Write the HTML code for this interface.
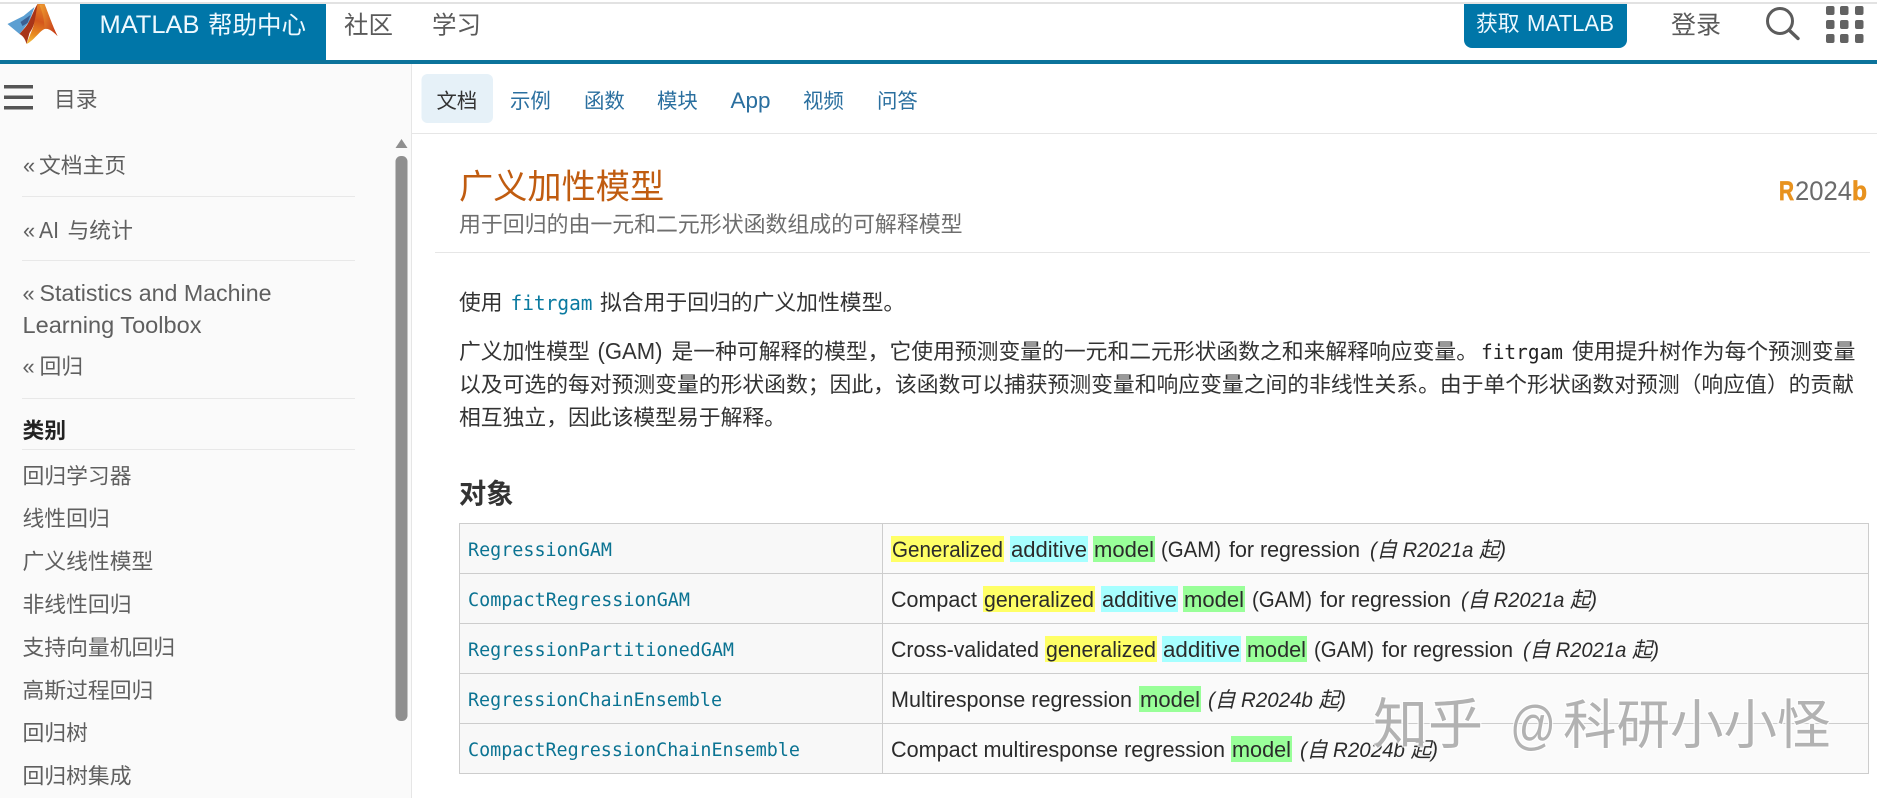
<!DOCTYPE html>
<html lang="zh-CN">
<head>
<meta charset="utf-8">
<title>广义加性模型 - MATLAB</title>
<style>
html,body{margin:0;padding:0;background:#fff;width:1877px;height:798px;overflow:hidden}
svg{display:block;filter:blur(.35px)}
text{font-family:"Liberation Sans","Noto Sans CJK SC",sans-serif;white-space:pre}
.m{font-family:"DejaVu Sans Mono","Liberation Mono",monospace}
.nav{font-size:24.5px;fill:#5a5a5a}
.side{font-size:21.8px;fill:#5f5f5f}
.lat{font-size:23.5px;fill:#5f5f5f}
.tab{font-size:20.4px;fill:#2a6f9f}
.p{font-size:21.8px;fill:#333}
.cell{font-size:21.8px;fill:#2b2b2b}
.em{font-size:21.2px;fill:#2b2b2b;font-style:italic}
.code{font-size:19px;fill:#0b7392}
</style>
</head>
<body>
<svg xmlns="http://www.w3.org/2000/svg" width="1877" height="798" viewBox="0 0 1877 798">
<defs>
<linearGradient id="lg" x1="0.6" y1="0" x2="0.35" y2="1">
<stop offset="0" stop-color="#e8892a"/><stop offset="0.45" stop-color="#d4561c"/><stop offset="0.8" stop-color="#e88a20"/><stop offset="1" stop-color="#f2b53a"/>
</linearGradient>
<linearGradient id="lr" x1="0" y1="0" x2="1" y2="0.6">
<stop offset="0" stop-color="#f0a030"/><stop offset="1" stop-color="#c8401a"/>
</linearGradient>
</defs>
<rect width="1877" height="798" fill="#fff"/>

<!-- header -->
<rect x="0" y="2" width="1877" height="2" fill="#e2e2e2"/>
<rect x="0" y="60" width="1877" height="4" fill="#0c739b"/>
<g transform="translate(-1.5,0)">
<path d="M9 24 L25 16 L36 7 L31 21 L25 29 L21 34 Z" fill="#5c9fd2"/>
<path d="M22 22 L32 15 L29 23 L24 26 Z" fill="#3c5f92"/>
<path d="M21 34 L27 27 C32 21 34 12 39 4 L41 4 C38 16 36 26 31 33 L28 44 C27 40 25 36 21 34 Z" fill="#a83418"/>
<path d="M39 4 L46 4 C50 14 54 26 59 36 C54 31 50 28 46 29 C41 31 35 41 28 44 C30 38 33 32 35 26 C37 18 38 10 39 4 Z" fill="url(#lg)"/>
<path d="M41 5 L46 4 C50 14 54 26 59 36 C54 31 50 28 46 29 C46 20 44 12 41 5 Z" fill="url(#lr)"/>
</g>
<rect x="80" y="4" width="246" height="56" fill="#0076a8"/>
<text x="99.5" y="33" font-size="25" fill="#eef9ff" textLength="100" lengthAdjust="spacingAndGlyphs">MATLAB</text>
<text x="208" y="33.5" font-size="24.5" fill="#eef9ff">帮助中心</text>
<text x="344" y="33.5" class="nav">社区</text>
<text x="432" y="33.5" class="nav">学习</text>
<path d="M1464 4 H1627 V40 a8 8 0 0 1 -8 8 H1472 a8 8 0 0 1 -8 -8 Z" fill="#0076a8"/>
<text x="1476" y="31" font-size="21.8" fill="#eef9ff">获取</text>
<text x="1527" y="31" font-size="23" fill="#eef9ff" textLength="87" lengthAdjust="spacingAndGlyphs">MATLAB</text>
<text x="1671" y="33.5" font-size="25" fill="#5a5a5a">登录</text>
<circle cx="1780" cy="21" r="12.5" fill="none" stroke="#5c5c5c" stroke-width="3"/>
<path d="M1789 30 L1798 38.5" stroke="#5c5c5c" stroke-width="3.4" stroke-linecap="round"/>
<g fill="#626262">
<rect x="1826" y="6" width="8.5" height="9" rx="2"/><rect x="1840" y="6" width="8.5" height="9" rx="2"/><rect x="1855" y="6" width="8.5" height="9" rx="2"/>
<rect x="1826" y="20" width="8.5" height="9" rx="2"/><rect x="1840" y="20" width="8.5" height="9" rx="2"/><rect x="1855" y="20" width="8.5" height="9" rx="2"/>
<rect x="1826" y="34" width="8.5" height="9" rx="2"/><rect x="1840" y="34" width="8.5" height="9" rx="2"/><rect x="1855" y="34" width="8.5" height="9" rx="2"/>
</g>

<!-- sidebar -->
<rect x="0" y="64" width="411" height="734" fill="#fafafa"/>
<rect x="411" y="64" width="1" height="734" fill="#e6e6e6"/>
<g fill="#555"><rect x="4" y="85" width="29" height="3.5"/><rect x="4" y="95.5" width="29" height="3.5"/><rect x="4" y="106" width="29" height="3.5"/></g>
<text x="54" y="107" class="side">目录</text>
<text x="23" y="173" class="side">«</text><text x="39" y="173" class="side">文档主页</text>
<rect x="22" y="196" width="333" height="1" fill="#e8e8e8"/>
<text x="23" y="238" class="side">«</text><text x="39" y="238" class="lat" textLength="20" lengthAdjust="spacingAndGlyphs">AI</text><text x="67.5" y="238" class="side">与统计</text>
<rect x="22" y="260" width="333" height="1" fill="#e8e8e8"/>
<text x="22.5" y="301" class="side">«</text><text x="39.5" y="301" class="lat" textLength="232" lengthAdjust="spacingAndGlyphs">Statistics and Machine</text>
<text x="22.5" y="333" class="lat" textLength="179" lengthAdjust="spacingAndGlyphs">Learning Toolbox</text>
<text x="22.5" y="374" class="side">«</text><text x="39.5" y="374" class="side">回归</text>
<rect x="22" y="398" width="333" height="1" fill="#e8e8e8"/>
<text x="22.5" y="438" class="side" style="fill:#222;font-weight:700">类别</text>
<rect x="22" y="449" width="333" height="1" fill="#e8e8e8"/>
<text x="22.5" y="483.5" class="side">回归学习器</text>
<text x="22.5" y="526" class="side">线性回归</text>
<text x="22.5" y="569" class="side">广义线性模型</text>
<text x="22.5" y="612" class="side">非线性回归</text>
<text x="22.5" y="655" class="side">支持向量机回归</text>
<text x="22.5" y="698" class="side">高斯过程回归</text>
<text x="22.5" y="740.5" class="side">回归树</text>
<text x="22.5" y="783.5" class="side">回归树集成</text>
<path d="M395.5 148 L401.5 139 L407.5 148 Z" fill="#8f8f8f"/>
<rect x="395.5" y="156" width="12" height="565" rx="5.5" fill="#8f8f8f"/>

<!-- tabs -->
<rect x="412" y="133" width="1465" height="1" fill="#e6e6e6"/>
<rect x="421.5" y="74" width="71.5" height="49" rx="6" fill="#e6f1f8"/>
<text x="436.5" y="108" class="tab" style="fill:#333">文档</text>
<text x="510" y="108" class="tab">示例</text>
<text x="584" y="108" class="tab">函数</text>
<text x="657" y="108" class="tab">模块</text>
<text x="730.5" y="108" class="tab" style="font-size:22px" textLength="40" lengthAdjust="spacingAndGlyphs">App</text>
<text x="803" y="108" class="tab">视频</text>
<text x="877" y="108" class="tab">问答</text>

<!-- title -->
<text x="459" y="198.5" font-size="34.2" fill="#c05c10">广义加性模型</text>
<text x="459" y="232" font-size="21.9" fill="#6e6e6e">用于回归的由一元和二元形状函数组成的可解释模型</text>
<text x="1779" y="200" font-size="27" font-weight="700" fill="#e8921e" stroke="#e8921e" stroke-width=".7" textLength="15" lengthAdjust="spacingAndGlyphs">R</text>
<text x="1795" y="200" font-size="27" fill="#6b6b6b" textLength="57" lengthAdjust="spacingAndGlyphs">2024</text>
<text x="1852" y="200" font-size="27" font-weight="700" fill="#e8921e" stroke="#e8921e" stroke-width=".7" textLength="15" lengthAdjust="spacingAndGlyphs">b</text>
<rect x="435" y="252" width="1435" height="1" fill="#e6e6e6"/>

<!-- paragraphs -->
<text x="459" y="310" class="p">使用</text>
<text x="510.5" y="310" class="m" font-size="20" fill="#0a7aa0" textLength="82" lengthAdjust="spacingAndGlyphs">fitrgam</text>
<text x="600" y="310" class="p">拟合用于回归的广义加性模型。</text>

<text x="459" y="359" class="p">广义加性模型</text>
<text x="597.5" y="359" class="p" style="font-size:23px" textLength="65" lengthAdjust="spacingAndGlyphs">(GAM)</text>
<text x="671.5" y="359" class="p">是一种可解释的模型，它使用预测变量的一元和二元形状函数之和来解释响应变量。</text>
<text x="1481" y="359" class="m" font-size="20" fill="#222" textLength="82" lengthAdjust="spacingAndGlyphs">fitrgam</text>
<text x="1572" y="359" class="p">使用提升树作为每个预测变量</text>
<text x="459" y="392" class="p">以及可选的每对预测变量的形状函数；因此，该函数可以捕获预测变量和响应变量之间的非线性关系。由于单个形状函数对预测（响应值）的贡献</text>
<text x="459" y="425" class="p">相互独立，因此该模型易于解释。</text>

<text x="459" y="503" font-size="27.2" font-weight="700" fill="#333">对象</text>

<!-- table -->
<rect x="459.5" y="523.5" width="1409" height="250" fill="#fafafa" stroke="#cdcdcd"/>
<rect x="460" y="524" width="422" height="249" fill="#f8f8f8"/>
<g fill="#cdcdcd">
<rect x="882" y="523" width="1" height="250"/>
<rect x="460" y="573" width="1409" height="1"/>
<rect x="460" y="623" width="1409" height="1"/>
<rect x="460" y="673" width="1409" height="1"/>
<rect x="460" y="723" width="1409" height="1"/>
</g>

<text x="468" y="556" class="m code" textLength="144" lengthAdjust="spacingAndGlyphs">RegressionGAM</text>
<text x="468" y="606" class="m code" textLength="222" lengthAdjust="spacingAndGlyphs">CompactRegressionGAM</text>
<text x="468" y="656" class="m code" textLength="266" lengthAdjust="spacingAndGlyphs">RegressionPartitionedGAM</text>
<text x="468" y="706" class="m code" textLength="254" lengthAdjust="spacingAndGlyphs">RegressionChainEnsemble</text>
<text x="468" y="756" class="m code" textLength="332" lengthAdjust="spacingAndGlyphs">CompactRegressionChainEnsemble</text>

<!-- row 1 -->
<rect x="891" y="536" width="113" height="26" fill="#ffff66"/>
<rect x="1010" y="536" width="78" height="26" fill="#a6ffff"/>
<rect x="1093" y="536" width="62" height="26" fill="#99ff99"/>
<text x="892" y="557" class="cell" textLength="111" lengthAdjust="spacingAndGlyphs">Generalized</text>
<text x="1011" y="557" class="cell" textLength="76" lengthAdjust="spacingAndGlyphs">additive</text>
<text x="1094" y="557" class="cell" textLength="60" lengthAdjust="spacingAndGlyphs">model</text>
<text x="1161" y="557" class="cell" textLength="60" lengthAdjust="spacingAndGlyphs">(GAM)</text>
<text x="1229" y="557" class="cell" textLength="131" lengthAdjust="spacingAndGlyphs">for regression</text>
<text x="1370" y="557" class="em" textLength="136" lengthAdjust="spacingAndGlyphs">(自 R2021a 起)</text>

<!-- row 2 -->
<rect x="983" y="586" width="112" height="26" fill="#ffff66"/>
<rect x="1101" y="586" width="77" height="26" fill="#a6ffff"/>
<rect x="1183" y="586" width="62" height="26" fill="#99ff99"/>
<text x="891" y="607" class="cell" textLength="86" lengthAdjust="spacingAndGlyphs">Compact</text>
<text x="984" y="607" class="cell" textLength="110" lengthAdjust="spacingAndGlyphs">generalized</text>
<text x="1102" y="607" class="cell" textLength="75" lengthAdjust="spacingAndGlyphs">additive</text>
<text x="1184" y="607" class="cell" textLength="60" lengthAdjust="spacingAndGlyphs">model</text>
<text x="1252" y="607" class="cell" textLength="60" lengthAdjust="spacingAndGlyphs">(GAM)</text>
<text x="1320" y="607" class="cell" textLength="131" lengthAdjust="spacingAndGlyphs">for regression</text>
<text x="1461" y="607" class="em" textLength="136" lengthAdjust="spacingAndGlyphs">(自 R2021a 起)</text>

<!-- row 3 -->
<rect x="1045" y="636" width="112" height="26" fill="#ffff66"/>
<rect x="1162" y="636" width="79" height="26" fill="#a6ffff"/>
<rect x="1246" y="636" width="61" height="26" fill="#99ff99"/>
<text x="891" y="657" class="cell" textLength="148" lengthAdjust="spacingAndGlyphs">Cross-validated</text>
<text x="1046" y="657" class="cell" textLength="110" lengthAdjust="spacingAndGlyphs">generalized</text>
<text x="1163" y="657" class="cell" textLength="77" lengthAdjust="spacingAndGlyphs">additive</text>
<text x="1247" y="657" class="cell" textLength="59" lengthAdjust="spacingAndGlyphs">model</text>
<text x="1314" y="657" class="cell" textLength="60" lengthAdjust="spacingAndGlyphs">(GAM)</text>
<text x="1382" y="657" class="cell" textLength="131" lengthAdjust="spacingAndGlyphs">for regression</text>
<text x="1523" y="657" class="em" textLength="136" lengthAdjust="spacingAndGlyphs">(自 R2021a 起)</text>

<!-- row 4 -->
<rect x="1139" y="686" width="62" height="26" fill="#99ff99"/>
<text x="891" y="707" class="cell" textLength="241" lengthAdjust="spacingAndGlyphs">Multiresponse regression</text>
<text x="1140" y="707" class="cell" textLength="60" lengthAdjust="spacingAndGlyphs">model</text>
<text x="1208" y="707" class="em" textLength="138" lengthAdjust="spacingAndGlyphs">(自 R2024b 起)</text>

<!-- row 5 -->
<rect x="1231" y="736" width="61" height="26" fill="#99ff99"/>
<text x="891" y="757" class="cell" textLength="334" lengthAdjust="spacingAndGlyphs">Compact multiresponse regression</text>
<text x="1232" y="757" class="cell" textLength="59" lengthAdjust="spacingAndGlyphs">model</text>
<text x="1300" y="757" class="em" textLength="138" lengthAdjust="spacingAndGlyphs">(自 R2024b 起)</text>

<!-- watermark -->
<g font-size="53.5" fill="#b2b2b2" stroke="#fff" stroke-width="2.5" style="paint-order:stroke" stroke-opacity="0.75">
<text x="1373" y="743.5" font-size="55">知乎</text>
<text x="1510" y="743.5" textLength="46" lengthAdjust="spacingAndGlyphs">@</text>
<text x="1563" y="743.5">科研小小怪</text>
</g>
</svg>
</body>
</html>
